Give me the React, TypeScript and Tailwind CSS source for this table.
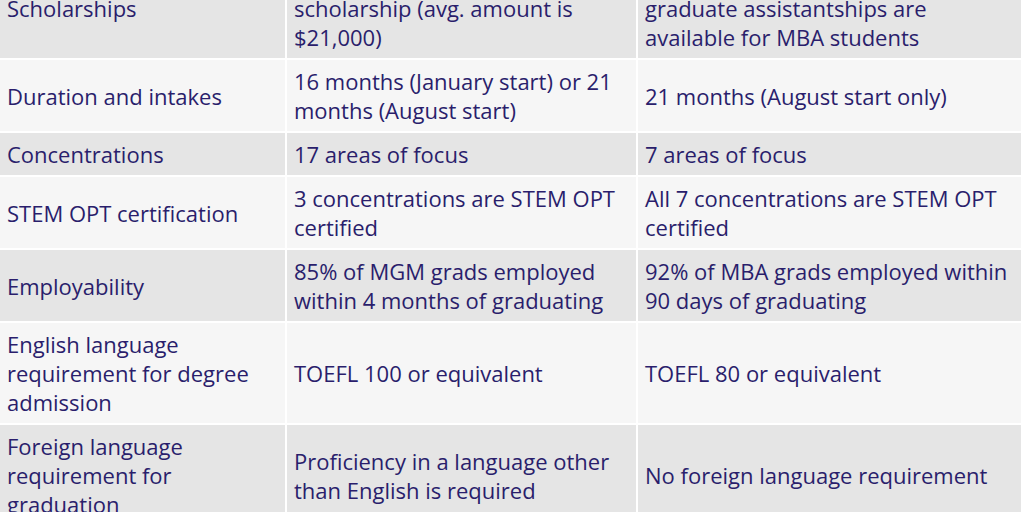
import React from 'react';

type Row = { label: string; mgm: string; mba: string };

const rows: Row[] = [
  {
    label: 'Scholarships',
    mgm: 'Many students receive a scholarship (avg. amount is $21,000)',
    mba: 'Merit-based scholarships and graduate assistantships are available for MBA students',
  },
  { label: 'Duration and intakes', mgm: '16 months (January start) or 21 months (August start)', mba: '21 months (August start only)' },
  { label: 'Concentrations', mgm: '17 areas of focus', mba: '7 areas of focus' },
  { label: 'STEM OPT certification', mgm: '3 concentrations are STEM OPT certified', mba: 'All 7 concentrations are STEM OPT certified' },
  { label: 'Employability', mgm: '85% of MGM grads employed within 4 months of graduating', mba: '92% of MBA grads employed within 90 days of graduating' },
  { label: 'English language requirement for degree admission', mgm: 'TOEFL 100 or equivalent', mba: 'TOEFL 80 or equivalent' },
  { label: 'Foreign language requirement for graduation', mgm: 'Proficiency in a language other than English is required', mba: 'No foreign language requirement' },
];

function Cell({ children, dark }: { children: React.ReactNode; dark: boolean }) {
  return (
    <div className={`flex items-center pl-[7px] pr-2 pt-[7px] pb-[6px] ${dark ? 'bg-[#e5e5e5]' : 'bg-[#f6f6f6]'}`}>
      <span>{children}</span>
    </div>
  );
}

export default function App() {
  return (
    <div className="h-[512px] w-[1024px] overflow-hidden bg-white">
      <div
        className="mt-[-42px] grid w-[1021px] grid-cols-[285px_349px_383px] gap-[2px] text-[22px] leading-[29px] text-[#2a1e6c]"
        style={{ fontFamily: '"Open Sans", "Noto Sans", sans-serif' }}
      >
        {rows.map((r, i) => (
          <React.Fragment key={r.label}>
            <Cell dark={i % 2 === 0}>{r.label}</Cell>
            <Cell dark={i % 2 === 0}>{r.mgm}</Cell>
            <Cell dark={i % 2 === 0}>{r.mba}</Cell>
          </React.Fragment>
        ))}
      </div>
    </div>
  );
}
